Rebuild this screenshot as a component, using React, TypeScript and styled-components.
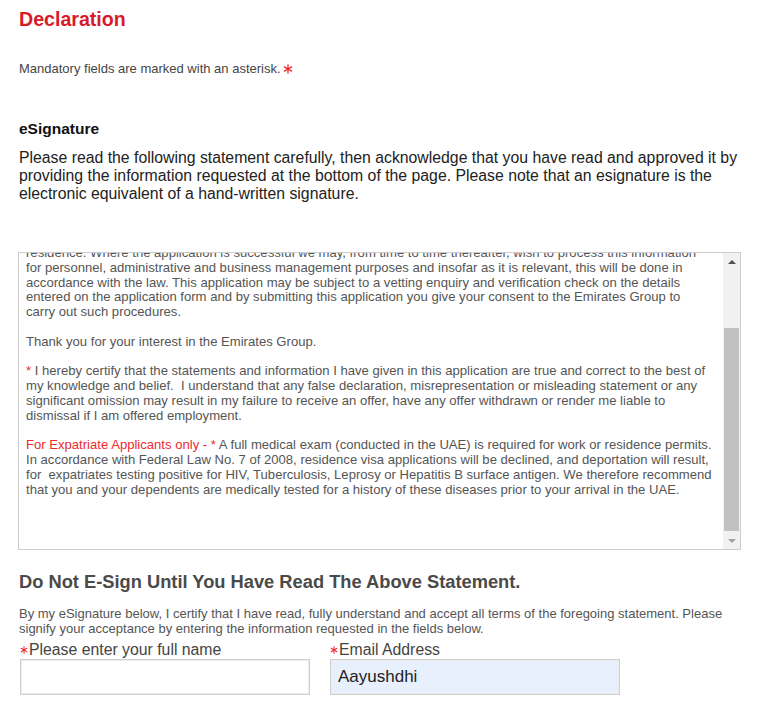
import React from "react";
import styled, { createGlobalStyle } from "styled-components";

const GlobalStyle = createGlobalStyle`
  html, body { margin: 0; padding: 0; background: #ffffff; }
  body { font-family: "Liberation Sans", Arial, sans-serif; }
`;

const Page = styled.div`
  padding: 0 27px 0 18px;
  display: flex;
  flex-direction: column;
  align-items: flex-start;
`;

const Title = styled.h1`
  margin: 8px 0 0 1px;
  font-size: 19.6px;
  line-height: 23px;
  font-weight: 700;
  color: #d71b28;
`;

const Note = styled.p`
  margin: 30px 0 0 1px;
  font-size: 13px;
  line-height: 15px;
  color: #454545;
  display: flex;
  align-items: center;
  gap: 2px;
`;

const SubTitle = styled.h2`
  margin: 44px 0 0 1px;
  font-size: 15.5px;
  line-height: 18px;
  font-weight: 700;
  color: #111111;
`;

const Intro = styled.p`
  margin: 11px 0 0 1px;
  font-size: 15.8px;
  line-height: 18px;
  color: #222222;
  width: 730px;
`;

const StatementBox = styled.div`
  margin-top: 49px;
  width: 723px;
  height: 298px;
  box-sizing: border-box;
  border: 1px solid #cdcdcd;
  display: flex;
  background: #ffffff;
`;

const StatementViewport = styled.div`
  flex: 1;
  overflow: hidden;
`;

const StatementText = styled.div`
  margin-top: -7px;
  padding: 0 7px;
  font-size: 13.1px;
  line-height: 14.8px;
  color: #555555;
  white-space: nowrap;
`;

const Red = styled.span`
  color: #ee2a2f;
`;

const ScrollBar = styled.div`
  width: 17px;
  background: #f1f1f1;
  display: flex;
  flex-direction: column;
`;

const ArrowButton = styled.div<{ $muted?: boolean }>`
  height: 17px;
  display: flex;
  align-items: center;
  justify-content: center;
  color: ${(p) => (p.$muted ? "#a3a3a3" : "#505050")};
`;

const Track = styled.div`
  flex: 1;
  padding: 58px 1px 1px;
  display: flex;
  flex-direction: column;
  justify-content: flex-end;
`;

const Thumb = styled.div`
  flex: 1;
  background: #c1c1c1;
`;

const Warning = styled.h3`
  margin: 21px 0 0 1px;
  font-size: 18.3px;
  line-height: 21px;
  font-weight: 700;
  color: #4a4a4a;
`;

const Consent = styled.p`
  margin: 14px 0 0 1px;
  font-size: 13px;
  line-height: 15px;
  color: #555555;
  width: 725px;
`;

const Fields = styled.div`
  margin: 5px 0 0 2px;
  display: flex;
  gap: 20px;
`;

const Field = styled.label`
  display: flex;
  flex-direction: column;
  width: 290px;
`;

const LabelText = styled.span`
  font-size: 15.8px;
  line-height: 18px;
  color: #444444;
  display: flex;
  align-items: center;
  gap: 1px;
`;

const Input = styled.input<{ $filled?: boolean }>`
  margin: 0;
  width: 290px;
  height: 36px;
  box-sizing: border-box;
  border: 1px solid #cfcfcf;
  box-shadow: inset 0 0 0 1px #ececec;
  padding: 0 7px;
  font-family: "Liberation Sans", Arial, sans-serif;
  font-size: 17px;
  color: #222222;
  background: ${(p) => (p.$filled ? "#e8f0fe" : "#ffffff")};
  outline: none;
`;

const Asterisk = ({ size }: { size: number }) => (
  <svg width={size} height={size} viewBox="0 0 10 10" aria-hidden="true">
    <g stroke="#ee2a2f" strokeWidth="1.3" strokeLinecap="round">
      <line x1="5" y1="0.8" x2="5" y2="9.2" />
      <line x1="1.4" y1="2.9" x2="8.6" y2="7.1" />
      <line x1="1.4" y1="7.1" x2="8.6" y2="2.9" />
    </g>
  </svg>
);

const Triangle = ({ up }: { up?: boolean }) => (
  <svg width="8" height="4" viewBox="0 0 8 4" aria-hidden="true">
    <polygon points={up ? "0,4 8,4 4,0" : "0,0 8,0 4,4"} fill="currentColor" />
  </svg>
);

export default function App() {
  return (
    <>
      <GlobalStyle />
      <Page>
        <Title>Declaration</Title>
        <Note>
          Mandatory fields are marked with an asterisk.
          <Asterisk size={10} />
        </Note>
        <SubTitle>eSignature</SubTitle>
        <Intro>
          Please read the following statement carefully, then acknowledge that you have read and approved it by
          providing the information requested at the bottom of the page. Please note that an esignature is the
          electronic equivalent of a hand-written signature.
        </Intro>
        <StatementBox>
          <StatementViewport>
            <StatementText>
              residence. Where the application is successful we may, from time to time thereafter, wish to process this information
              <br />
              for personnel, administrative and business management purposes and insofar as it is relevant, this will be done in
              <br />
              accordance with the law. This application may be subject to a vetting enquiry and verification check on the details
              <br />
              entered on the application form and by submitting this application you give your consent to the Emirates Group to
              <br />
              carry out such procedures.
              <br />
              <br />
              Thank you for your interest in the Emirates Group.
              <br />
              <br />
              <Red>*</Red> I hereby certify that the statements and information I have given in this application are true and correct to the best of
              <br />
              {"my knowledge and belief.\u00a0 I understand that any false declaration, misrepresentation or misleading statement or any"}
              <br />
              significant omission may result in my failure to receive an offer, have any offer withdrawn or render me liable to
              <br />
              dismissal if I am offered employment.
              <br />
              <br />
              <Red>For Expatriate Applicants only - *</Red> A full medical exam (conducted in the UAE) is required for work or residence permits.
              <br />
              In accordance with Federal Law No. 7 of 2008, residence visa applications will be declined, and deportation will result,
              <br />
              {"for\u00a0 expatriates testing positive for HIV, Tuberculosis, Leprosy or Hepatitis B surface antigen. We therefore recommend"}
              <br />
              that you and your dependents are medically tested for a history of these diseases prior to your arrival in the UAE.
            </StatementText>
          </StatementViewport>
          <ScrollBar>
            <ArrowButton>
              <Triangle up />
            </ArrowButton>
            <Track>
              <Thumb />
            </Track>
            <ArrowButton $muted>
              <Triangle />
            </ArrowButton>
          </ScrollBar>
        </StatementBox>
        <Warning>Do Not E-Sign Until You Have Read The Above Statement.</Warning>
        <Consent>
          By my eSignature below, I certify that I have read, fully understand and accept all terms of the foregoing statement. Please
          signify your acceptance by entering the information requested in the fields below.
        </Consent>
        <Fields>
          <Field>
            <LabelText>
              <Asterisk size={8} />
              Please enter your full name
            </LabelText>
            <Input type="text" defaultValue="" />
          </Field>
          <Field>
            <LabelText>
              <Asterisk size={8} />
              Email Address
            </LabelText>
            <Input type="text" defaultValue="Aayushdhi" $filled />
          </Field>
        </Fields>
      </Page>
    </>
  );
}
